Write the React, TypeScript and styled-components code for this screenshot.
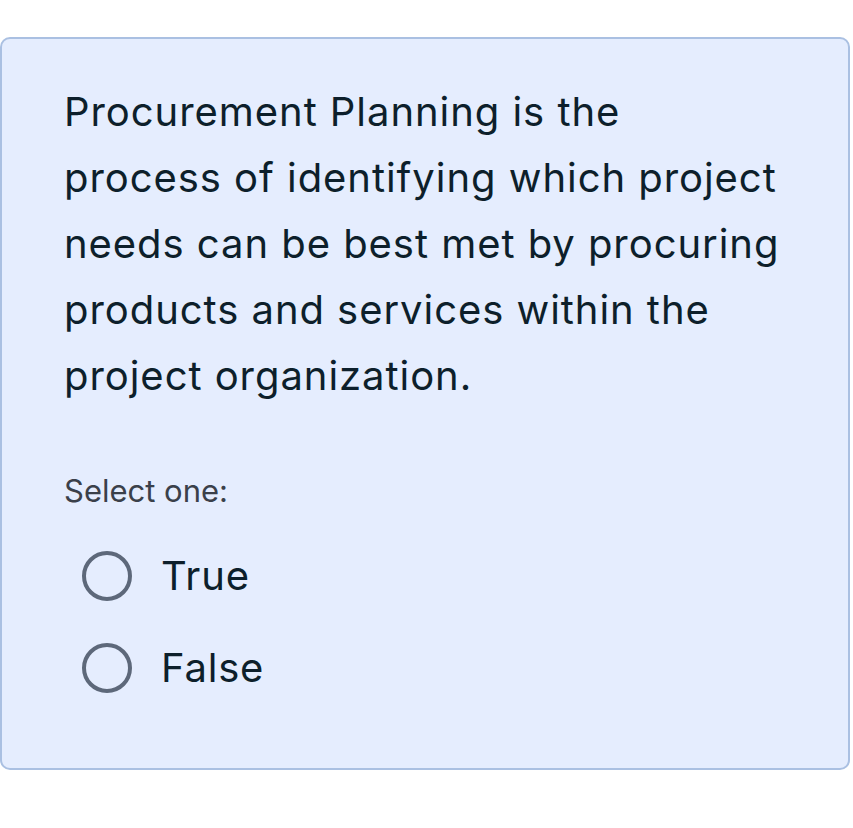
import React from "react";
import styled, { createGlobalStyle } from "styled-components";

const GlobalStyle = createGlobalStyle`
  body {
    margin: 0;
    background: #ffffff;
    font-family: Inter, "Noto Sans", sans-serif;
  }
`;

const Page = styled.div`
  padding-top: 37px;
  width: 850px;
`;

const Card = styled.div`
  background: #e5edfe;
  border: 2px solid #aac0e2;
  border-radius: 10px;
  padding: 40px 64px 75px 62px;
`;

const Question = styled.p`
  margin: 0;
  font-size: 40px;
  line-height: 66px;
  letter-spacing: 0.95px;
  color: #0d1f2b;
`;

const Prompt = styled.div`
  margin-top: 62px;
  font-size: 31px;
  line-height: 40px;
  color: #3a404a;
`;

const Options = styled.div`
  display: flex;
  flex-direction: column;
  gap: 42px;
  margin-top: 40px;
  padding-left: 18px;
`;

const Option = styled.label`
  display: flex;
  align-items: center;
  gap: 29px;
  font-size: 40px;
  line-height: 50px;
  letter-spacing: 0.8px;
  color: #0d1f2b;
  cursor: pointer;
`;

const Radio = styled.span`
  box-sizing: border-box;
  width: 50px;
  height: 50px;
  border-radius: 50%;
  border: 4px solid #5d687a;
  flex-shrink: 0;
`;

export default function App() {
  return (
    <>
      <GlobalStyle />
      <Page>
        <Card>
          <Question>
            Procurement Planning is the process of identifying which project
            needs can be best met by procuring products and services within
            the project organization.
          </Question>
          <Prompt>Select one:</Prompt>
          <Options>
            <Option>
              <Radio />
              True
            </Option>
            <Option>
              <Radio />
              False
            </Option>
          </Options>
        </Card>
      </Page>
    </>
  );
}
